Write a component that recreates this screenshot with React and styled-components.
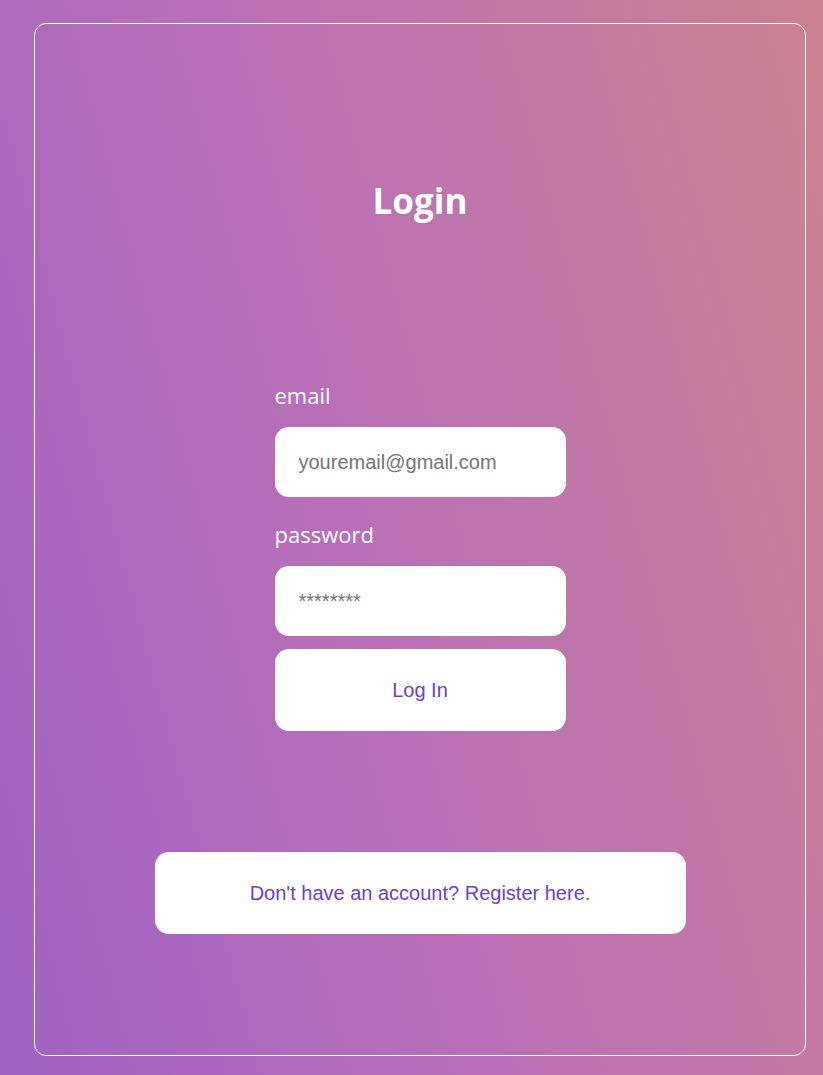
import styled, { createGlobalStyle } from "styled-components"

const GlobalStyle = createGlobalStyle`
  html, body {
    margin: 0;
    padding: 0;
  }
  * {
    box-sizing: border-box;
  }
`

const Page = styled.div`
  min-height: 1075px;
  padding: 23px 17px 19px 34px;
  background: linear-gradient(75deg, #9f62c2 0%, #b96fb7 45%, #ca8290 100%);
`

const Card = styled.div`
  height: 1033px;
  border: 1px solid #ffffff;
  border-radius: 12px;
  display: flex;
  flex-direction: column;
  align-items: center;
  padding-top: 155px;
`

const Title = styled.h1`
  margin: 0;
  font-family: "Open Sans", "Noto Sans", sans-serif;
  font-size: 35px;
  line-height: 43px;
  font-weight: 700;
  color: #ffffff;
`

const Form = styled.form`
  width: 291px;
  margin-top: 158px;
  display: flex;
  flex-direction: column;
`

const Label = styled.label`
  font-family: "Open Sans", "Noto Sans", sans-serif;
  font-size: 22px;
  line-height: 30px;
  color: #ffffff;
  margin-top: ${(p) => (p.$first ? "0" : "22px")};
  margin-bottom: 17px;
`

const Input = styled.input`
  height: 70px;
  width: 100%;
  border: none;
  border-radius: 14px;
  background: #ffffff;
  padding: 0 24px;
  font-family: "Liberation Sans", Arial, sans-serif;
  font-size: 20px;
  color: #333;
  outline: none;

  &::placeholder {
    color: #757575;
  }
`

const Button = styled.button`
  height: 82px;
  width: 100%;
  margin-top: 13px;
  border: none;
  border-radius: 14px;
  background: #ffffff;
  font-family: "Liberation Sans", Arial, sans-serif;
  font-size: 20px;
  color: #6a3fcf;
  cursor: pointer;
`

const RegisterLink = styled.a`
  width: 531px;
  height: 82px;
  margin-top: 121px;
  border-radius: 14px;
  background: #ffffff;
  display: flex;
  align-items: center;
  justify-content: center;
  font-family: "Liberation Sans", Arial, sans-serif;
  font-size: 20px;
  color: #6a3fcf;
  text-decoration: none;
`

function App() {
  return (
    <>
      <GlobalStyle />
      <Page>
        <Card>
          <Title>Login</Title>
          <Form onSubmit={(e) => e.preventDefault()}>
            <Label $first htmlFor="email">email</Label>
            <Input id="email" type="email" placeholder="youremail@gmail.com" />
            <Label htmlFor="password">password</Label>
            <Input id="password" type="password" placeholder="********" />
            <Button type="submit">Log In</Button>
          </Form>
          <RegisterLink href="#">Don't have an account? Register here.</RegisterLink>
        </Card>
      </Page>
    </>
  )
}

export default App
